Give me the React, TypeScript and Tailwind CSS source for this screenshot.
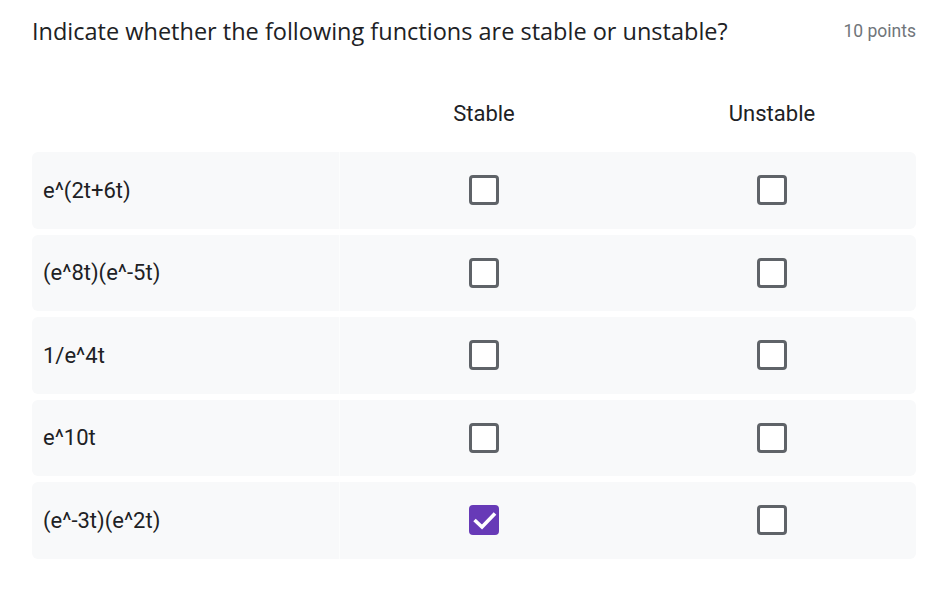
import { useState } from "react";

// Grid question: one row per function, two checkbox columns.
const ROWS = ["e^(2t+6t)", "(e^8t)(e^-5t)", "1/e^4t", "e^10t", "(e^-3t)(e^2t)"];
const COLS = ["Stable", "Unstable"];

function Box({ checked, onClick }: { checked: boolean; onClick: () => void }) {
  return (
    <button
      onClick={onClick}
      aria-checked={checked}
      role="checkbox"
      className={
        checked
          ? "h-[30px] w-[30px] rounded-[4px] bg-[#673ab7]"
          : "h-[30px] w-[30px] rounded-[4px] border-[3px] border-[#5f6368] bg-white"
      }
    >
      {checked && (
        <svg viewBox="0 0 30 30" className="h-[30px] w-[30px]" fill="none">
          <path d="M5.5 15l7.5 7 13-13.5" stroke="white" strokeWidth="3.6" />
        </svg>
      )}
    </button>
  );
}

export default function App() {
  const [picked, setPicked] = useState<Record<string, boolean>>({ "4-0": true });

  return (
    <div className="min-h-[596px] w-[938px] bg-white px-[22px] pt-[15px] font-['Roboto',sans-serif] text-[#202124]">
      <div className="flex items-center justify-between pl-[10px]">
        <h1 className="font-['Open_Sans',sans-serif] text-[23.5px] leading-[32px]">
          Indicate whether the following functions are stable or unstable?
        </h1>
        <span className="text-[17.5px] leading-[24px] text-[#70757a]">10 points</span>
      </div>

      <div className="ml-[10px] mt-[48px] w-[884px]">
        <div className="flex h-[36px] items-center">
          <div className="w-[308px]" />
          {COLS.map((c) => (
            <div key={c} className="flex-1 text-center text-[22px]">
              {c}
            </div>
          ))}
        </div>

        <div className="mt-[21px] flex flex-col gap-[6px]">
          {ROWS.map((r, i) => (
            <div key={r} className="flex h-[76.5px] items-center rounded-[6px] bg-[#f8f9fa]">
              <div className="flex h-full w-[308px] items-center border-r border-white/60 pl-[11px] text-[22px]">
                {r}
              </div>
              {COLS.map((_, j) => (
                <div key={j} className="flex flex-1 justify-center">
                  <Box
                    checked={!!picked[`${i}-${j}`]}
                    onClick={() => setPicked((p) => ({ ...p, [`${i}-${j}`]: !p[`${i}-${j}`] }))}
                  />
                </div>
              ))}
            </div>
          ))}
        </div>
      </div>
    </div>
  );
}
